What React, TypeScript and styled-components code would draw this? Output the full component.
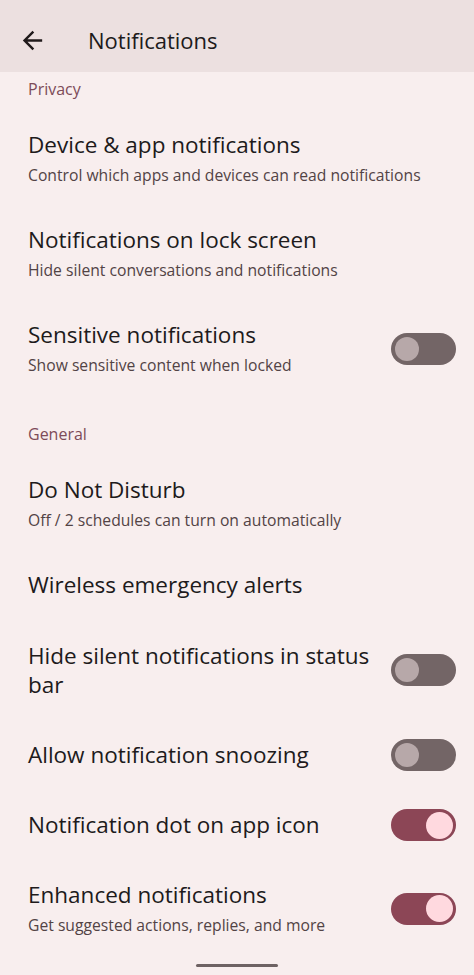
import React, { useState } from "react";
import styled, { createGlobalStyle } from "styled-components";

const colors = {
    page: "#f8eeee",
    header: "#ece0e0",
    title: "#201a1b",
    caption: "#524345",
    section: "#7d4b58",
    offTrack: "#736566",
    offThumb: "#b7a8a9",
    onTrack: "#8c4656",
    onThumb: "#ffd9df",
    handle: "#6e6263",
};

const GlobalStyle = createGlobalStyle`
    html, body {
        margin: 0;
        padding: 0;
        background-color: ${colors.page};
    }
    body {
        font-family: "Open Sans", Roboto, sans-serif;
        -webkit-font-smoothing: antialiased;
    }
`;

const Screen = styled.div`
    width: 474px;
    height: 975px;
    background-color: ${colors.page};
    display: flex;
    flex-direction: column;
    overflow: hidden;
    position: relative;
`;

const TopBar = styled.header`
    height: 72px;
    flex-shrink: 0;
    background-color: ${colors.header};
    display: flex;
    align-items: center;
    padding: 8px 0 0 18px;
    box-sizing: border-box;
`;

const BackButton = styled.button`
    all: unset;
    width: 29px;
    height: 29px;
    display: flex;
    align-items: center;
    justify-content: center;
    color: ${colors.title};
    cursor: pointer;
`;

const PageTitle = styled.h1`
    margin: 0 0 0 41px;
    font-size: 22px;
    font-weight: 400;
    color: ${colors.title};
`;

const List = styled.div`
    display: flex;
    flex-direction: column;
`;

const SectionLabel = styled.div<{ $first?: boolean }>`
    padding: ${(p) => (p.$first ? "5px" : "27px")} 28px 9px;
    font-size: 16px;
    line-height: 24px;
    color: ${colors.section};
`;

const Row = styled.div<{ $caption?: boolean }>`
    display: flex;
    align-items: center;
    padding: 21px 18px ${(p) => (p.$caption ? "19px" : "21px")} 28px;
    gap: 14px;
`;

const RowText = styled.div`
    flex: 1;
    min-width: 0;
`;

const RowTitle = styled.div<{ $wrap?: boolean }>`
    font-size: 22.5px;
    line-height: ${(p) => (p.$wrap ? "29px" : "28px")};
    color: ${colors.title};
`;

const RowCaption = styled.div`
    margin-top: 5px;
    font-size: 15.7px;
    line-height: 22px;
    color: ${colors.caption};
`;

const Track = styled.button<{ $on: boolean }>`
    all: unset;
    flex-shrink: 0;
    width: 65px;
    height: 32px;
    margin: -2px 0;
    border-radius: 16px;
    background-color: ${(p) => (p.$on ? colors.onTrack : colors.offTrack)};
    display: flex;
    align-items: center;
    justify-content: ${(p) => (p.$on ? "flex-end" : "flex-start")};
    padding: 0 ${(p) => (p.$on ? "3px" : "4px")};
    box-sizing: border-box;
    cursor: pointer;
`;

const Thumb = styled.span<{ $on: boolean }>`
    width: ${(p) => (p.$on ? "27px" : "24px")};
    height: ${(p) => (p.$on ? "27px" : "24px")};
    border-radius: 50%;
    background-color: ${(p) => (p.$on ? colors.onThumb : colors.offThumb)};
`;

const HomeHandle = styled.div`
    position: absolute;
    left: 196px;
    bottom: 8px;
    width: 82px;
    height: 3px;
    border-radius: 2px;
    background-color: ${colors.handle};
`;

type Setting = {
    title: string;
    caption?: string;
    toggle?: boolean;
    wrap?: boolean;
};

const privacy: Setting[] = [
    { title: "Device & app notifications", caption: "Control which apps and devices can read notifications" },
    { title: "Notifications on lock screen", caption: "Hide silent conversations and notifications" },
    { title: "Sensitive notifications", caption: "Show sensitive content when locked", toggle: false },
];

const general: Setting[] = [
    { title: "Do Not Disturb", caption: "Off / 2 schedules can turn on automatically" },
    { title: "Wireless emergency alerts" },
    { title: "Hide silent notifications in status bar", toggle: false, wrap: true },
    { title: "Allow notification snoozing", toggle: false },
    { title: "Notification dot on app icon", toggle: true },
    { title: "Enhanced notifications", caption: "Get suggested actions, replies, and more", toggle: true },
];

function Switch(props: { initial: boolean }) {
    const [on, setOn] = useState(props.initial);
    return (
        <Track $on={on} onClick={() => setOn(!on)}>
            <Thumb $on={on} />
        </Track>
    );
}

function SettingRow(props: { item: Setting }) {
    return (
        <Row $caption={!!props.item.caption}>
            <RowText>
                <RowTitle $wrap={props.item.wrap}>{props.item.title}</RowTitle>
                {props.item.caption ? <RowCaption>{props.item.caption}</RowCaption> : null}
            </RowText>
            {props.item.toggle !== undefined ? <Switch initial={props.item.toggle} /> : null}
        </Row>
    );
}

function App() {
    return (
        <>
            <GlobalStyle />
            <Screen>
                <TopBar>
                    <BackButton aria-label="Back">
                        <svg width="29" height="29" viewBox="0 0 24 24" fill="currentColor">
                            <path d="M20 11H7.83l5.59-5.59L12 4l-8 8 8 8 1.41-1.41L7.83 13H20v-2z" />
                        </svg>
                    </BackButton>
                    <PageTitle>Notifications</PageTitle>
                </TopBar>
                <List>
                    <SectionLabel $first>Privacy</SectionLabel>
                    {privacy.map((item) => (
                        <SettingRow key={item.title} item={item} />
                    ))}
                    <SectionLabel>General</SectionLabel>
                    {general.map((item) => (
                        <SettingRow key={item.title} item={item} />
                    ))}
                </List>
                <HomeHandle />
            </Screen>
        </>
    );
}

export default App;
